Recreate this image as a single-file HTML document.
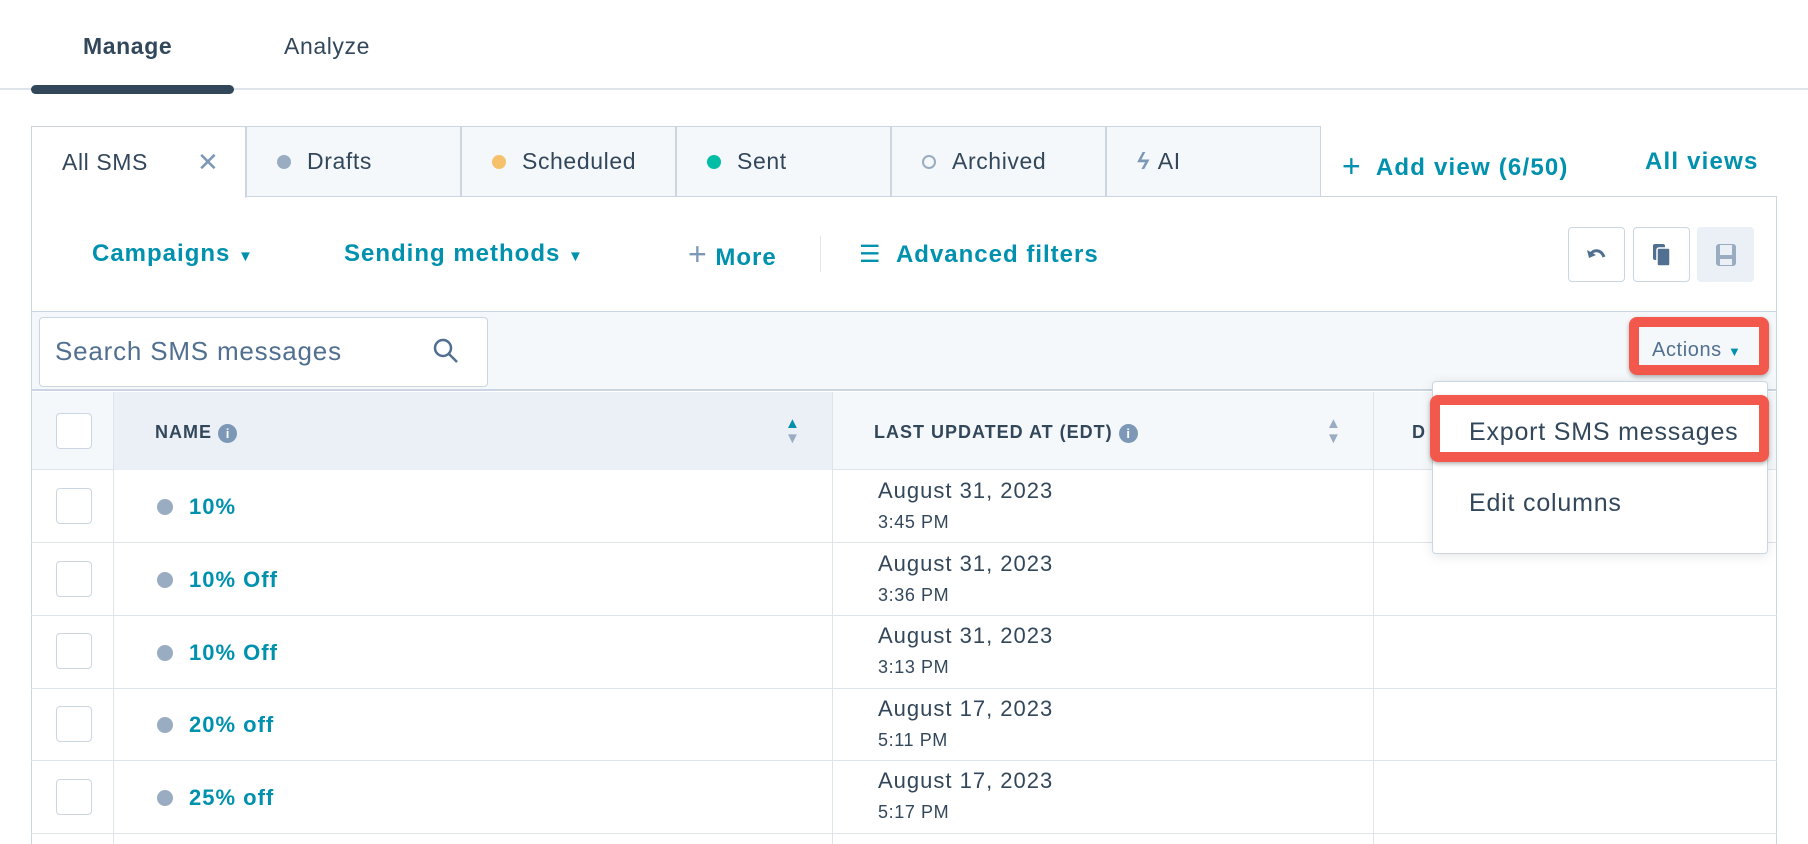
<!DOCTYPE html>
<html style="overflow:hidden;height:844px"><head><meta charset="utf-8"><style>
*{box-sizing:border-box;margin:0;padding:0}
body{width:1808px;height:844px;overflow:hidden;background:#fff;font-family:"Liberation Sans",sans-serif;color:#33475b;position:relative;letter-spacing:0.6px}
.a{position:absolute}
.teal{color:#0091ae;font-weight:bold}
.tab{position:absolute;top:126px;height:71px;width:215px;background:#f5f8fa;border:1px solid #cbd6e2;font-size:23px;display:flex;align-items:center;padding-left:30px}
.dot{width:14px;height:14px;border-radius:50%;display:inline-block;margin-right:16px}
.cb{position:absolute;left:56px;width:36px;height:36px;border:1px solid #cbd6e2;border-radius:4px;background:#fff}
.row{position:absolute;left:31px;width:1746px;height:73px;border-bottom:1px solid #dfe3eb}
.name{position:absolute;left:157px;font-size:22px;font-weight:bold;color:#0091ae;display:flex;align-items:center;letter-spacing:1px}
.name .dot{background:#99acc2;width:16px;height:16px;margin-right:16px}
.dt{position:absolute;left:878px;font-size:22px;letter-spacing:1px}
.tm{position:absolute;left:878px;font-size:18px}
.btn{position:absolute;top:227px;width:57px;height:55px;border:1px solid #cbd6e2;border-radius:4px;background:#fff;display:flex;align-items:center;justify-content:center}
.tri{font-size:15px;letter-spacing:0}
</style></head><body>
<div class="a" style="left:83px;top:33px;font-size:23px;font-weight:bold">Manage</div>
<div class="a" style="left:284px;top:33px;font-size:23px">Analyze</div>
<div class="a" style="left:0;top:88px;width:1808px;height:2px;background:#dfe3eb"></div>
<div class="a" style="left:31px;top:85px;width:203px;height:9px;border-radius:5px;background:#33475b"></div>

<div class="a" style="left:31px;top:196px;width:1746px;height:660px;border-left:1px solid #cbd6e2;border-right:1px solid #cbd6e2"></div>
<div class="tab" style="left:31px;background:#fff;border-bottom:none;height:72px">All SMS<span style="position:absolute;left:165px;font-size:26px;color:#7c98b6">✕</span></div>
<div class="tab" style="left:246px"><span class="dot" style="background:#99acc2"></span>Drafts</div>
<div class="tab" style="left:461px"><span class="dot" style="background:#f5c26b"></span>Scheduled</div>
<div class="tab" style="left:676px"><span class="dot" style="background:#00bda5"></span>Sent</div>
<div class="tab" style="left:891px"><span class="dot" style="border:2px solid #99acc2"></span>Archived</div>
<div class="tab" style="left:1106px"><span style="color:#7c98b6;margin-right:8px;font-style:italic;font-weight:bold">ϟ</span>AI</div>
<div class="a" style="left:1320px;top:196px;width:457px;height:1px;background:#cbd6e2"></div>
<div class="a teal" style="left:1342px;top:146px;font-size:24px;letter-spacing:1.2px"><span style="font-weight:normal;font-size:32px;margin-right:14px;position:relative;top:2px">+</span>Add view (6/50)</div>
<div class="a teal" style="left:1645px;top:148px;font-size:24px;letter-spacing:1.2px">All views</div>

<div class="a teal" style="left:92px;top:240px;font-size:24px;letter-spacing:1px">Campaigns <span class="tri">▼</span></div>
<div class="a teal" style="left:344px;top:240px;font-size:24px;letter-spacing:1px">Sending methods <span class="tri">▼</span></div>
<div class="a teal" style="left:688px;top:236px;font-size:24px;letter-spacing:1px"><span style="font-weight:normal;font-size:32px;color:#7c98b6">+</span> More</div>
<div class="a" style="left:820px;top:236px;width:1px;height:36px;background:#dfe3eb"></div>
<div class="a teal" style="left:859px;top:240px;font-size:24px;letter-spacing:1px"><span style="font-weight:normal;color:#0091ae">☰</span>&nbsp; Advanced filters</div>
<div class="btn" style="left:1568px"><svg width="22" height="18" viewBox="0 0 22 18"><path d="M4 9 C7 3,15 3,18 11" fill="none" stroke="#516f90" stroke-width="3"/><path d="M1 4 L3 12 L10 9Z" fill="#516f90"/></svg></div>
<div class="btn" style="left:1633px"><svg width="20" height="24" viewBox="0 0 20 24"><rect x="1" y="1" width="12" height="16" rx="2" fill="#516f90"/><rect x="5" y="5" width="13" height="18" rx="2" fill="#516f90" stroke="#fff" stroke-width="1.5"/></svg></div>
<div class="btn" style="left:1697px;background:#eaf0f6;border-color:#eaf0f6"><svg width="22" height="24" viewBox="0 0 22 24"><rect x="1" y="1" width="20" height="22" rx="3" fill="#99acc2"/><rect x="5" y="2" width="12" height="10" fill="#eaf0f6"/><rect x="5" y="16" width="12" height="6" fill="#eaf0f6"/></svg></div>

<div class="a" style="left:32px;top:311px;width:1744px;height:80px;background:#f5f8fa;border-top:1px solid #cbd6e2;border-bottom:2px solid #cbd6e2"></div>
<div class="a" style="left:39px;top:317px;width:449px;height:70px;background:#fff;border:1px solid #cbd6e2;border-radius:4px"></div>
<div class="a" style="left:55px;top:336px;font-size:26px;color:#516f90;letter-spacing:0.8px">Search SMS messages</div>
<svg class="a" style="left:432px;top:337px" width="28" height="28" viewBox="0 0 28 28"><circle cx="11" cy="11" r="8" fill="none" stroke="#516f90" stroke-width="2.5"/><path d="M17 17 L25 25" stroke="#516f90" stroke-width="2.5"/></svg>

<div class="a" style="left:32px;top:392px;width:1744px;height:78px;background:#f5f8fa;border-bottom:1px solid #dfe3eb"></div>
<div class="a" style="left:113px;top:392px;width:720px;height:78px;background:#eaf0f6;border-left:1px solid #dfe3eb;border-right:1px solid #dfe3eb"></div>
<div class="a" style="left:1373px;top:392px;width:1px;height:452px;background:#dfe3eb"></div>
<div class="a" style="left:113px;top:470px;width:1px;height:374px;background:#dfe3eb"></div>
<div class="a" style="left:832px;top:470px;width:1px;height:374px;background:#dfe3eb"></div>
<div class="cb" style="top:413px"></div>
<div class="a" style="left:155px;top:422px;font-size:18px;font-weight:bold;letter-spacing:1px">NAME <span style="display:inline-block;width:19px;height:19px;border-radius:50%;background:#7c98b6;color:#fff;font-size:13px;text-align:center;line-height:19px;letter-spacing:0">i</span></div>
<div class="a" style="left:785px;top:416px;font-size:15px;line-height:15px;color:#0091ae">▲<br><span style="color:#99acc2">▼</span></div>
<div class="a" style="left:874px;top:422px;font-size:18px;font-weight:bold;letter-spacing:1px">LAST UPDATED AT (EDT) <span style="display:inline-block;width:19px;height:19px;border-radius:50%;background:#7c98b6;color:#fff;font-size:13px;text-align:center;line-height:19px;letter-spacing:0">i</span></div>
<div class="a" style="left:1326px;top:416px;font-size:15px;line-height:15px;color:#99acc2">▲<br>▼</div>
<div class="a" style="left:1412px;top:422px;font-size:18px;font-weight:bold">D</div>

<div class="row" style="top:470px"></div><div class="row" style="top:543px"></div><div class="row" style="top:616px"></div><div class="row" style="top:688px"></div><div class="row" style="top:761px"></div>
<div class="cb" style="top:488px"></div><div class="cb" style="top:561px"></div><div class="cb" style="top:633px"></div><div class="cb" style="top:706px"></div><div class="cb" style="top:779px"></div>
<div class="name" style="top:494px"><span class="dot"></span>10%</div>
<div class="name" style="top:567px"><span class="dot"></span>10% Off</div>
<div class="name" style="top:640px"><span class="dot"></span>10% Off</div>
<div class="name" style="top:712px"><span class="dot"></span>20% off</div>
<div class="name" style="top:785px"><span class="dot"></span>25% off</div>
<div class="dt" style="top:478px">August 31, 2023</div><div class="tm" style="top:512px">3:45 PM</div>
<div class="dt" style="top:551px">August 31, 2023</div><div class="tm" style="top:585px">3:36 PM</div>
<div class="dt" style="top:623px">August 31, 2023</div><div class="tm" style="top:657px">3:13 PM</div>
<div class="dt" style="top:696px">August 17, 2023</div><div class="tm" style="top:730px">5:11 PM</div>
<div class="dt" style="top:768px">August 17, 2023</div><div class="tm" style="top:802px">5:17 PM</div>

<div class="a" style="left:1652px;top:339px;font-size:20px;color:#516f90">Actions <span style="font-size:13px;color:#0091ae;letter-spacing:0">▼</span></div>
<div class="a" style="left:1629px;top:317px;width:140px;height:58px;border:10px solid #f2584b;border-radius:8px;box-shadow:0 2px 4px rgba(0,0,0,.3)"></div>
<div class="a" style="left:1432px;top:381px;width:336px;height:173px;background:#fff;border:1px solid #cbd6e2;border-radius:4px;box-shadow:0 2px 12px rgba(0,0,0,.1)"></div>
<div class="a" style="left:1469px;top:418px;font-size:25px;letter-spacing:0.8px">Export SMS messages</div>
<div class="a" style="left:1469px;top:489px;font-size:25px;letter-spacing:0.8px">Edit columns</div>
<div class="a" style="left:1430px;top:395px;width:339px;height:67px;border:10px solid #f2584b;border-radius:8px;box-shadow:0 2px 4px rgba(0,0,0,.3)"></div>
</body></html>
